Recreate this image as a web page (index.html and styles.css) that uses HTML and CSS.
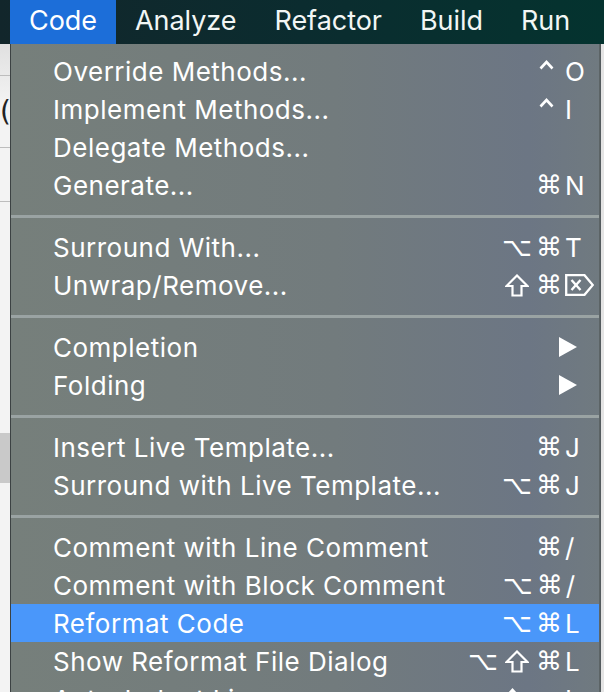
FILE: index.html
```html
<!DOCTYPE html>
<html>
<head>
<meta charset="utf-8">
<link rel="stylesheet" href="styles.css">
</head>
<body>
<div class="menubar">
  <span class="mb-item active">Code</span>
  <span class="mb-item">Analyze</span>
  <span class="mb-item">Refactor</span>
  <span class="mb-item">Build</span>
  <span class="mb-item">Run</span>
</div>
<div class="stage">
  <div class="side left">
    <div class="s-top"></div>
    <div class="s-line"></div>
    <div class="s-char">(</div>
    <div class="s-line"></div>
    <div class="s-gap1"></div>
    <div class="s-line"></div>
    <div class="s-gap2"></div>
    <div class="s-block"></div>
  </div>
  <div class="menu">
    <div class="row"><span class="label">Override Methods...</span><span class="mods"><svg class="ctrl" width="15" height="10" viewBox="0 0 15 10"><polyline points="1.5,8.5 7.5,2 13.5,8.5" fill="none" stroke="#fff" stroke-width="2.6"/></svg></span><span class="key">O</span></div>
    <div class="row"><span class="label">Implement Methods...</span><span class="mods"><svg class="ctrl" width="15" height="10" viewBox="0 0 15 10"><polyline points="1.5,8.5 7.5,2 13.5,8.5" fill="none" stroke="#fff" stroke-width="2.6"/></svg></span><span class="key">I</span></div>
    <div class="row"><span class="label">Delegate Methods...</span><span class="mods"></span><span class="key"></span></div>
    <div class="row"><span class="label">Generate...</span><span class="mods"><span class="g">⌘</span></span><span class="key">N</span></div>
    <div class="sep"></div>
    <div class="row"><span class="label">Surround With...</span><span class="mods"><span class="g">⌥</span><span class="g">⌘</span></span><span class="key">T</span></div>
    <div class="row"><span class="label">Unwrap/Remove...</span><span class="mods"><svg class="shift" width="24" height="23" viewBox="0 0 24 23"><polygon points="12,1.5 22.5,12 16.5,12 16.5,21.5 7.5,21.5 7.5,12 1.5,12" fill="none" stroke="#fff" stroke-width="2.2" stroke-linejoin="miter"/></svg><span class="g">⌘</span></span><span class="key"><svg class="del" width="29" height="22" viewBox="0 0 29 22"><polygon points="1.2,1.2 19.5,1.2 27.8,11 19.5,20.8 1.2,20.8" fill="none" stroke="#fff" stroke-width="2.3"/><line x1="6.5" y1="6" x2="15.5" y2="16" stroke="#fff" stroke-width="2.4"/><line x1="15.5" y1="6" x2="6.5" y2="16" stroke="#fff" stroke-width="2.4"/></svg></span></div>
    <div class="sep"></div>
    <div class="row"><span class="label">Completion</span><span class="arrow"><svg width="18" height="20" viewBox="0 0 18 20"><polygon points="0,0 18,10 0,20" fill="#fff"/></svg></span></div>
    <div class="row"><span class="label">Folding</span><span class="arrow"><svg width="18" height="20" viewBox="0 0 18 20"><polygon points="0,0 18,10 0,20" fill="#fff"/></svg></span></div>
    <div class="sep"></div>
    <div class="row"><span class="label">Insert Live Template...</span><span class="mods"><span class="g">⌘</span></span><span class="key">J</span></div>
    <div class="row"><span class="label">Surround with Live Template...</span><span class="mods"><span class="g">⌥</span><span class="g">⌘</span></span><span class="key">J</span></div>
    <div class="sep"></div>
    <div class="row"><span class="label">Comment with Line Comment</span><span class="mods"><span class="g">⌘</span></span><span class="key">/</span></div>
    <div class="row"><span class="label">Comment with Block Comment</span><span class="mods"><span class="g">⌥</span><span class="g">⌘</span></span><span class="key">/</span></div>
    <div class="row selected"><span class="label">Reformat Code</span><span class="mods"><span class="g">⌥</span><span class="g">⌘</span></span><span class="key">L</span></div>
    <div class="row"><span class="label">Show Reformat File Dialog</span><span class="mods"><span class="g">⌥</span><svg class="shift" width="24" height="23" viewBox="0 0 24 23"><polygon points="12,1.5 22.5,12 16.5,12 16.5,21.5 7.5,21.5 7.5,12 1.5,12" fill="none" stroke="#fff" stroke-width="2.2"/></svg><span class="g">⌘</span></span><span class="key">L</span></div>
    <div class="row"><span class="label">Auto-Indent Lines</span><span class="mods"><svg class="ctrl" width="15" height="10" viewBox="0 0 15 10"><polyline points="1.5,8.5 7.5,2 13.5,8.5" fill="none" stroke="#fff" stroke-width="2.6"/></svg><span class="g">⌥</span></span><span class="key">I</span></div>
  </div>
  <div class="side right"></div>
</div>
</body>
</html>
```
FILE: styles.css
```css
html, body {
  margin: 0;
  padding: 0;
}
body {
  width: 604px;
  height: 692px;
  overflow: hidden;
  background: #ececec;
  font-family: "Inter", "Noto Sans", "DejaVu Sans", sans-serif;
  color: #fff;
}
.menubar {
  height: 44px;
  display: flex;
  align-items: stretch;
  padding-left: 10px;
  background: linear-gradient(to right, #12262b, #0b2c2f 50%, #04332f);
}
.mb-item {
  display: flex;
  align-items: center;
  padding: 0 19px 3px 19px;
  font-size: 27px;
  letter-spacing: -0.05px;
  color: #f2f6f5;
}
.mb-item.active {
  background: #1c6ed9;
  color: #fff;
}
.stage {
  display: flex;
  height: 648px;
}
.side {
  background: #ececec;
}
.side.left {
  width: 10px;
  display: flex;
  flex-direction: column;
  background: linear-gradient(to bottom, #e0e0e0, #f3f3f3 60px, #f3f3f3);
}
.s-top { height: 31px; }
.s-line { height: 1px; background: #bdbdbd; }
.s-char {
  height: 71px;
  font-family: "DejaVu Sans", sans-serif;
  font-size: 28px;
  line-height: 71px;
  color: #222;
  overflow: hidden;
}
.s-gap1 { height: 53px; }
.s-gap2 { height: 231px; }
.s-block { height: 50px; background: #c9c9c9; }
.side.right {
  width: 3px;
  border-left: 1px solid #545b5e;
  background: #e4e4e4;
}
.menu {
  width: 589px;
  border-left: 1px solid #3c4243;
  border-right: 1px solid #5c6466;
  padding-top: 8px;
  background: linear-gradient(to right, #767f7b 0%, #727b7d 55%, #6c7684 88%, #707a80 100%);
  overflow: hidden;
}
.row {
  height: 38px;
  display: grid;
  grid-template-columns: 1fr 120px 34px;
  align-items: center;
  padding-left: 42px;
  font-size: 26px;
  white-space: nowrap;
}
.row.selected {
  background: #4a97fa;
}
.label {
  letter-spacing: 0.5px;
}
.mods {
  display: flex;
  justify-content: flex-end;
  align-items: center;
  gap: 4px;
  padding-right: 3px;
  height: 38px;
}
.mods .g {
  font-family: "DejaVu Sans", sans-serif;
  font-size: 26px;
  line-height: 1;
}
.mods .ctrl {
  align-self: flex-start;
  margin-top: 8px;
  margin-right: 8px;
}
.mods .shift {
  margin: 0 3px;
}
.mods svg, .key svg {
  display: block;
}
.key {
  display: flex;
  align-items: center;
  height: 38px;
  font-size: 26px;
  letter-spacing: 0;
}
.arrow {
  grid-column: 2 / 4;
  display: flex;
  justify-content: flex-end;
  padding-right: 22px;
}
.arrow svg {
  display: block;
}
.sep {
  height: 3px;
  margin: 11px 0 10px;
  background: #9aa3a3;
}
```
